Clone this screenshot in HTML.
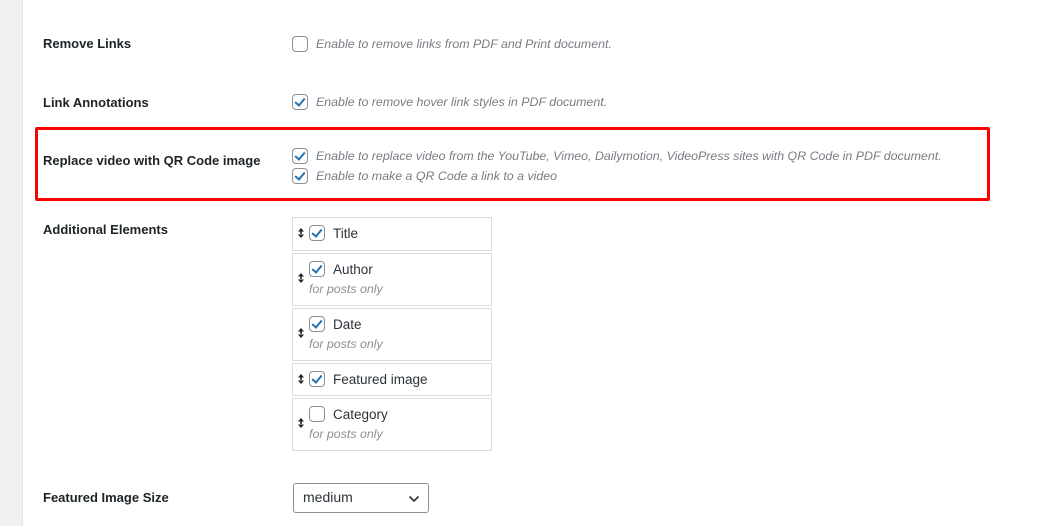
<!DOCTYPE html>
<html><head><meta charset="utf-8"><style>
body{margin:0;width:1045px;height:526px;background:#fff;position:relative;overflow:hidden;font-family:"Liberation Sans",sans-serif;color:#1d2327}
.strip{position:absolute;left:0;top:0;width:22px;height:526px;background:#f0f0f1;border-right:1px solid #e2e4e7}
.lbl{position:absolute;left:43px;font-size:13px;font-weight:bold;color:#1d2327;white-space:nowrap}
.cb{position:absolute;width:14px;height:14px;border:1px solid #8c8f94;border-radius:4px;background:#fff}
.cb.on::after{content:"";position:absolute;left:4px;top:1px;width:4px;height:8px;border:solid #2271b1;border-width:0 2px 2px 0;transform:rotate(40deg)}
.desc{position:absolute;left:316px;font-size:12.4px;font-style:italic;color:#787c82;white-space:nowrap}
.red{position:absolute;left:35px;top:127px;width:949px;height:68px;border:3.5px solid #f00;border-radius:2px}
.box{position:absolute;left:292px;width:198px;border:1px solid #dcdcde;background:#fff}
.box svg.arr{position:absolute;left:5px}
.box .t{position:absolute;left:40px;font-size:13.5px;color:#2c3338}
.box .n{position:absolute;left:16px;font-size:12.4px;font-style:italic;color:#8c8f94}
.sel{position:absolute;left:293px;top:483px;width:134px;height:28px;border:1px solid #8c8f94;border-radius:3px;font-size:14px;color:#2c3338}
</style></head><body>
<div class="strip"></div>

<div class="lbl" style="top:36px">Remove Links</div>
<div class="cb" style="left:292px;top:36px"></div>
<div class="desc" style="top:37px">Enable to remove links from PDF and Print document.</div>

<div class="lbl" style="top:95px">Link Annotations</div>
<div class="cb on" style="left:292px;top:94px"></div>
<div class="desc" style="top:95px">Enable to remove hover link styles in PDF document.</div>

<div class="red"></div>
<div class="lbl" style="top:153px">Replace video with QR Code image</div>
<div class="cb on" style="left:292px;top:148px"></div>
<div class="desc" style="top:149px">Enable to replace video from the YouTube, Vimeo, Dailymotion, VideoPress sites with QR Code in PDF document.</div>
<div class="cb on" style="left:292px;top:168px"></div>
<div class="desc" style="top:169px">Enable to make a QR Code a link to a video</div>

<div class="lbl" style="top:222px">Additional Elements</div>
<div class="box" style="top:217px;height:32px"><svg class="arr" style="top:10px" width="6" height="10" viewBox="0 0 6 10"><path d="M3 0L6 3.5H0ZM3 10L6 6.5H0ZM2.2 3h1.6v4H2.2Z" fill="#1d2327"/></svg><div class="cb on" style="left:16px;top:7px"></div><span class="t" style="top:8px">Title</span></div>
<div class="box" style="top:253px;height:51px"><svg class="arr" style="top:19px" width="6" height="10" viewBox="0 0 6 10"><path d="M3 0L6 3.5H0ZM3 10L6 6.5H0ZM2.2 3h1.6v4H2.2Z" fill="#1d2327"/></svg><div class="cb on" style="left:16px;top:7px"></div><span class="t" style="top:8px">Author</span><span class="n" style="top:28px">for posts only</span></div>
<div class="box" style="top:308px;height:51px"><svg class="arr" style="top:19px" width="6" height="10" viewBox="0 0 6 10"><path d="M3 0L6 3.5H0ZM3 10L6 6.5H0ZM2.2 3h1.6v4H2.2Z" fill="#1d2327"/></svg><div class="cb on" style="left:16px;top:7px"></div><span class="t" style="top:8px">Date</span><span class="n" style="top:28px">for posts only</span></div>
<div class="box" style="top:363px;height:31px"><svg class="arr" style="top:10px" width="6" height="10" viewBox="0 0 6 10"><path d="M3 0L6 3.5H0ZM3 10L6 6.5H0ZM2.2 3h1.6v4H2.2Z" fill="#1d2327"/></svg><div class="cb on" style="left:16px;top:7px"></div><span class="t" style="top:8px">Featured image</span></div>
<div class="box" style="top:398px;height:51px"><svg class="arr" style="top:19px" width="6" height="10" viewBox="0 0 6 10"><path d="M3 0L6 3.5H0ZM3 10L6 6.5H0ZM2.2 3h1.6v4H2.2Z" fill="#1d2327"/></svg><div class="cb" style="left:16px;top:7px"></div><span class="t" style="top:8px">Category</span><span class="n" style="top:28px">for posts only</span></div>

<div class="lbl" style="top:490px">Featured Image Size</div>
<div class="sel"><span style="position:absolute;left:9px;top:5px">medium</span>
<svg style="position:absolute;left:114px;top:11px" width="12" height="8" viewBox="0 0 12 8"><path d="M1.5 1.5L6 6L10.5 1.5" fill="none" stroke="#2c3338" stroke-width="1.6"/></svg></div>
</body></html>
